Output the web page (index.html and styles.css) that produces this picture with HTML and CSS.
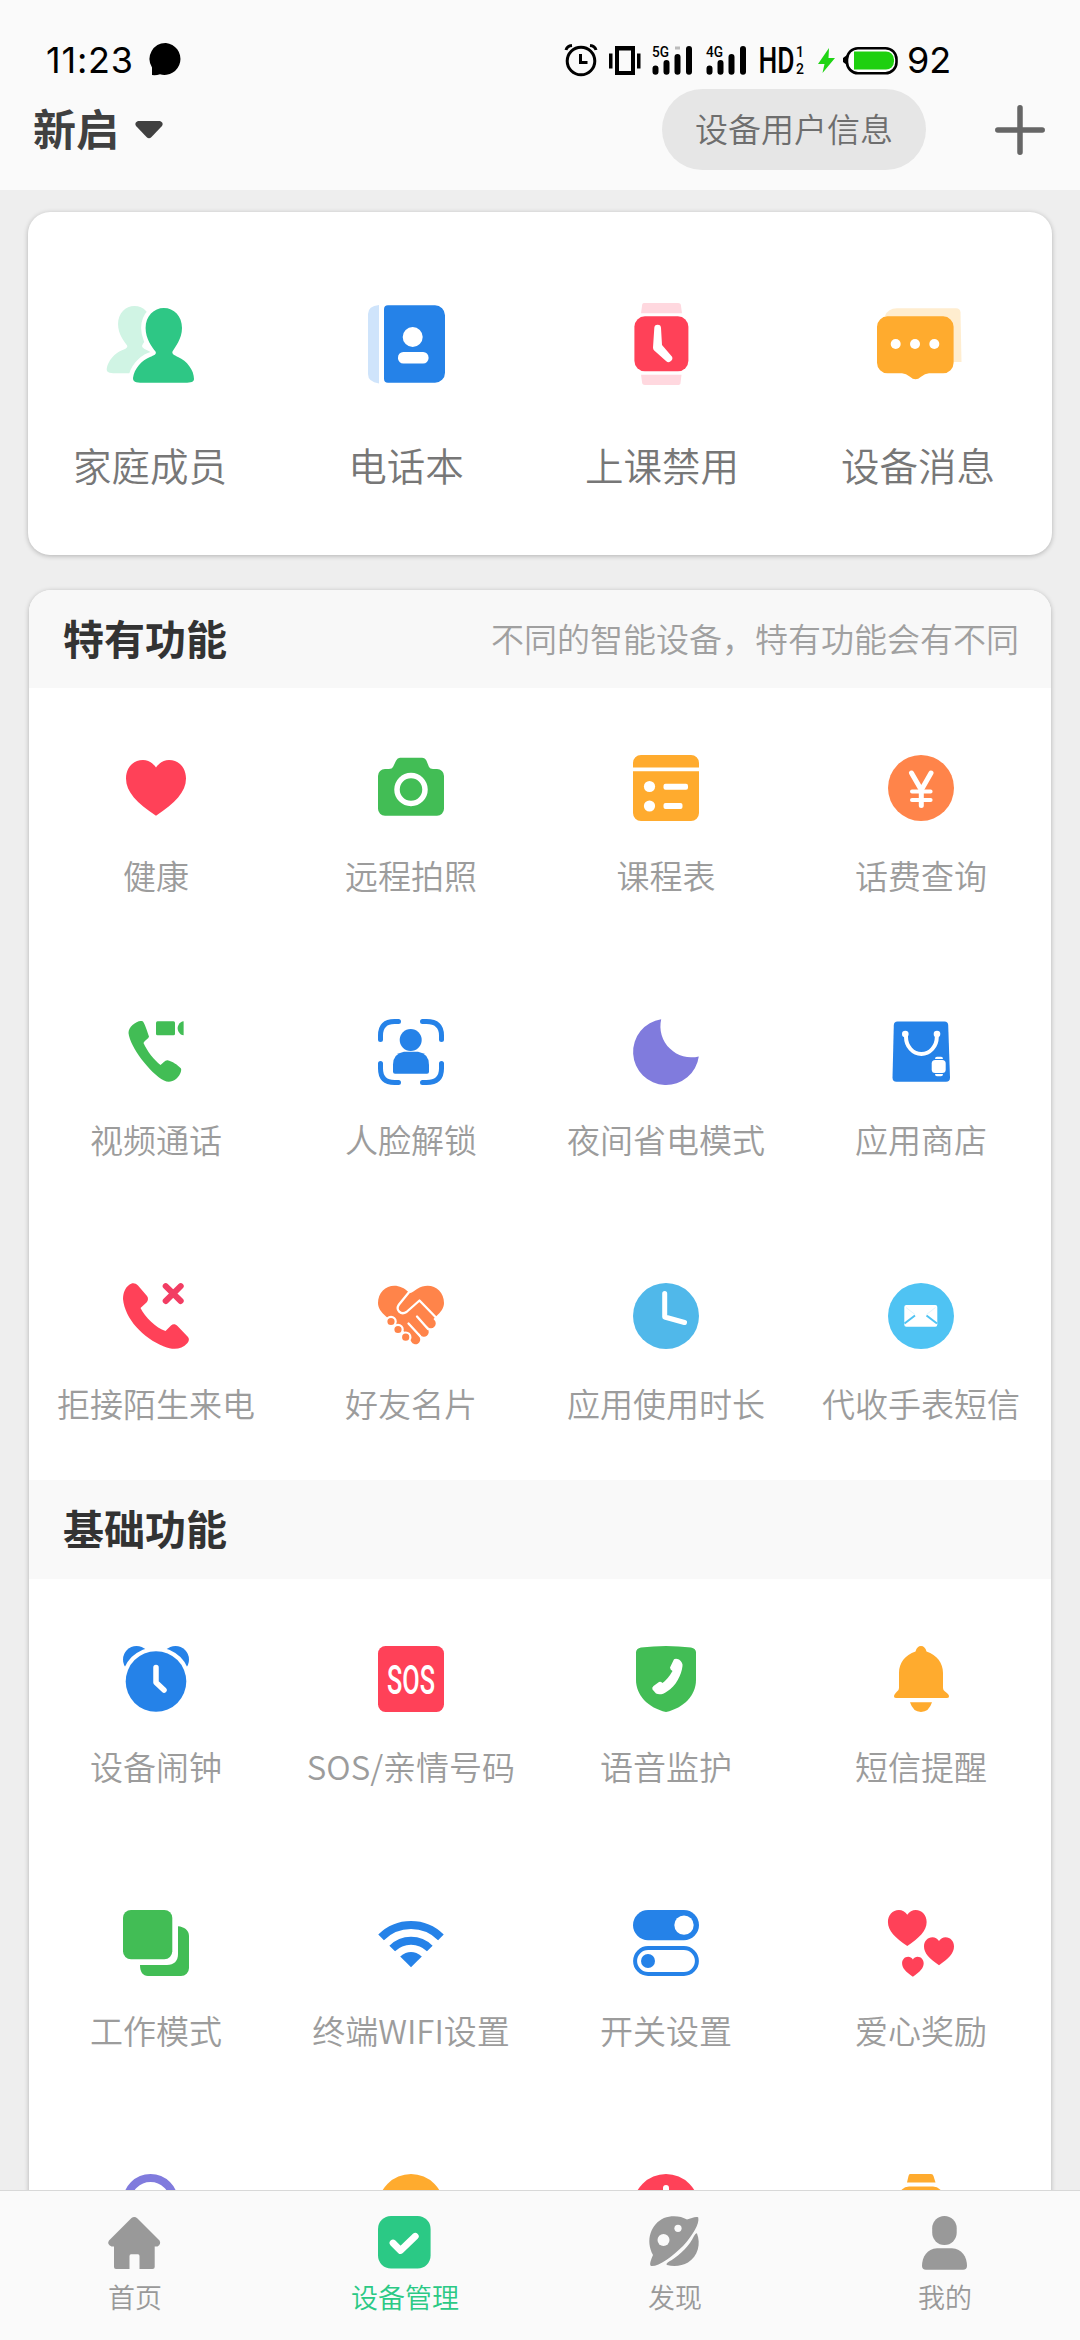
FILE: index.html
```html
<!DOCTYPE html>
<html lang="zh-CN">
<head>
<meta charset="utf-8">
<title>设备管理</title>
<link rel="stylesheet" href="styles.css">
</head>
<body>
<svg class="defs" width="0" height="0" aria-hidden="true">
  <defs>
    <path id="heart" d="M33 12.5C36 8 41 5 46 5C56 5 63 13 63 23.5C63 37 52 48 33 60.8C14 48 3 37 3 23.5C3 13 10 5 20 5C25 5 30 8 33 12.5Z"/>
    <path id="person" d="M58.8 9C69 9 77 17 77 29C77 40 70 48 67.5 52.5C66.5 55 70 56.5 73 58C82 62 89 71 89 80C89 83 86 83.7 80 83.7H38C30 83.7 28 82.5 28 79C29 70 37 61 45 58C49 56.5 52 55 50.5 52.5C47 48 40.6 40 40.6 29C40.6 17 49 9 58.8 9Z"/>
  </defs>
</svg>
<div class="screen">
  <header class="top">
    <div class="status">
      <span class="time">11:23</span>
      <svg class="bubble" width="32" height="34" viewBox="0 0 32 34"><path d="M16 0a16 16 0 1 1-6 31.300Q6 32.500 2 32V24.500A16 16 0 0 1 16 0Z"/></svg>
      <div class="indicators">
        <svg class="i-alarm" width="32" height="34" viewBox="0 0 32 34" fill="none" stroke="#000" stroke-width="3"><circle cx="16" cy="18" r="13.800"/><path d="M15.500 11v8.500h7M1 7q1-4 6-4.500M31 7q-1-4-6-4.500"/></svg>
        <svg class="i-vibrate" width="32" height="34" viewBox="0 0 32 34"><path fill-rule="evenodd" d="M6 3h20v29H6ZM10 7.500v20.500h12v-20.500ZM0 10.500h3.500v15H0ZM28 10.500h3.500v15h-3.500Z"/></svg>
        <svg class="i-signal" width="40" height="34" viewBox="0 0 40 34"><g stroke="#000" stroke-width="6" stroke-linecap="round"><path d="M3.500 25.500v3.300M14.500 20v8.800M25.500 14v14.800M37 6v22.800"/></g><text x="0" y="14" font-size="14.500" textLength="17" lengthAdjust="spacingAndGlyphs">5G</text><path d="M23 5h5" stroke="#bbb" stroke-width="3"/></svg>
        <svg class="i-signal" width="40" height="34" viewBox="0 0 40 34"><g stroke="#000" stroke-width="6" stroke-linecap="round"><path d="M3.500 25.500v3.300M14.500 20v8.800M25.500 14v14.800M37 6v22.800"/></g><text x="0" y="14" font-size="14.500" textLength="17" lengthAdjust="spacingAndGlyphs">4G</text></svg>
        <svg class="i-hd" width="46" height="34" viewBox="0 0 46 34"><text x="-1.500" y="30" font-size="36" textLength="36" lengthAdjust="spacingAndGlyphs">HD</text><text x="36" y="14" font-size="14">1</text><text x="36" y="31" font-size="14">2</text></svg>
        <svg class="i-bolt" width="17" height="34" viewBox="0 0 17 34"><path fill="#1fd414" d="M11 5 0 21h6.500L4.500 30 17 15h-6.500Z"/></svg>
        <svg class="i-battery" width="55" height="34" viewBox="0 0 55 34"><rect x="4" y="5.200" width="49.500" height="25" rx="11" fill="#fff" stroke="#000" stroke-width="2.600"/><path d="M4 12v10L0 19v-4Z"/><path fill="#1ed00f" d="M11 8.500h32a8 8 0 0 1 8 8v2a8 8 0 0 1-8 8H11Z"/></svg>
        <span class="percent">92</span>
      </div>
    </div>
    <div class="bar">
      <h1 class="device">新启</h1>
      <svg class="caret" width="28" height="18" viewBox="0 0 28 18"><path fill="#404040" d="M3 0h22q4 1.500 2 5L16.500 16q-2.500 2.500-5 0L1 5q-2-3.500 2-5Z"/></svg>
      <button class="pill">设备用户信息</button>
      <svg class="plus" width="50" height="50" viewBox="0 0 50 50"><path d="M25 2.800v44.400M2.800 25h44.400" stroke="#666" stroke-width="5.500" stroke-linecap="round"/></svg>
    </div>
  </header>

  <main class="content">
    <section class="card quick">
      <div class="tile"><svg viewBox="0 0 90 90"><use href="#person" transform="translate(-23.500 -1) scale(.9)" fill="#d0f4e4"/><use href="#person" fill="#2ec785" stroke="#fff" stroke-width="9" paint-order="stroke"/></svg><span>家庭成员</span></div>
      <div class="tile"><svg viewBox="0 0 90 90"><path fill="#cfe4fb" d="M18 6v78.500Q7 83 7 75V15Q7 7 18 6Z"/><path fill="#2582e8" d="M27 6.300h47a10 10 0 0 1 10 10v57.400a10 10 0 0 1-10 10H27q-4 0-4-4V10.300q0-4 4-4Z"/><circle cx="51.700" cy="38" r="10" fill="#fff"/><rect x="37" y="53" width="30.500" height="11.600" rx="5.300" fill="#fff"/></svg><span>电话本</span></div>
      <div class="tile"><svg viewBox="0 0 90 90"><path fill="#ffd8df" d="M27 4h34q3 0 3 3l1 7.300H24L25 7q0-3 2-3ZM24 75.700h40.500L63.500 84q0 2-3 2H28q-3 0-3-3Z"/><rect x="17.400" y="17.300" width="54" height="55" rx="10.500" fill="#ff4158"/><path fill="#fff" d="M37.300 29a3.300 3.300 0 0 1 6.700 0L45 46 54 56.500a3.600 3.600 0 0 1-5 5.500L37.200 51.500Q36 50.500 36 48.500Z"/></svg><span>上课禁用</span></div>
      <div class="tile"><svg viewBox="0 0 90 90"><path fill="#ffedcf" d="M12 17q3-7.700 12-7.700h59q4 0 4.500 4L88.500 63H80Z"/><path fill="#ffab2e" d="M14.500 17.300h55.600a10.500 10.500 0 0 1 10.500 10.500v36a10.500 10.500 0 0 1-10.500 10.500H56q-4 0-8 3.500-5.500 5-11 0-4-3.500-8-3.500H14.500A10.500 10.500 0 0 1 4 63.800v-36a10.500 10.500 0 0 1 10.500-10.500Z"/><g fill="#fff"><circle cx="22.700" cy="45" r="5"/><circle cx="42" cy="45" r="5"/><circle cx="61.300" cy="45" r="5"/></g></svg><span>设备消息</span></div>
    </section>

    <section class="card features">
      <div class="heading"><h2>特有功能</h2><p>不同的智能设备，特有功能会有不同</p></div>
      <div class="grid">
        <div class="item"><svg viewBox="0 0 66 66"><use href="#heart" fill="#ff4158"/></svg><span>健康</span></div>
        <div class="item"><svg viewBox="0 0 66 66"><path fill="#42bd55" d="M22 2.800h22q3 0 4.500 3L51 12q1 2 4 2h4a7 7 0 0 1 7 7v32.700a7 7 0 0 1-7 7H7a7 7 0 0 1-7-7V21a7 7 0 0 1 7-7h4q3 0 4-2l3-6.200q1.500-3 4-3Z"/><circle cx="33" cy="34.500" r="14" fill="none" stroke="#fff" stroke-width="5.500"/></svg><span>远程拍照</span></div>
        <div class="item"><svg viewBox="0 0 66 66"><path fill="#ffab2e" d="M8 0h50a8 8 0 0 1 8 8v4.500H0V8a8 8 0 0 1 8-8ZM0 16.300h66V58a8 8 0 0 1-8 8H8a8 8 0 0 1-8-8Z"/><g fill="#fff"><circle cx="16.500" cy="31.500" r="5.600"/><circle cx="16.500" cy="51" r="5.600"/><rect x="30.500" y="28.700" width="24.500" height="6" rx="2"/><rect x="30.500" y="48" width="19" height="6" rx="2"/></g></svg><span>课程表</span></div>
        <div class="item"><svg viewBox="0 0 66 66"><circle cx="33" cy="33" r="33" fill="#ff844a"/><g fill="none" stroke="#fff" stroke-linecap="round"><path stroke-width="5" d="M23.500 18 33.300 35 43 18M33.300 35v15.500"/><path stroke-width="4" d="M24 36.500h18.600M24 44.900h18.600"/></g></svg><span>话费查询</span></div>

        <div class="item"><svg viewBox="0 0 66 66"><path fill="#42bd55" d="M9.500 6C13 3 17 1 20 2.500C22 5 24 12 26 17.500C25.500 20 22 21 20.500 24C24 32 31 41 37.500 46C40 44 42 41 44.500 41.200C49 42 55 46 58 49.500C59 52 56 58 53 60C49 63 45 63.500 41 61.500C27 54 7 28 5.500 14C5.500 11 7 8 9.500 6Z"/><rect x="33" y="2.300" width="19" height="14" rx="1.500" fill="#42bd55"/><path fill="#42bd55" d="M60.600 2.300v14q-3 0-5-3.500-2-3.500 0-7 2-3.500 5-3.500Z"/></svg><span>视频通话</span></div>
        <div class="item"><svg viewBox="0 0 66 66"><path fill="none" stroke="#2582e8" stroke-width="5" stroke-linecap="round" d="M2.500 20.500V16.500Q2.500 2.500 16.500 2.500H20.500M44.500 2.500h4Q63.500 2.500 63.500 16.500V20.500M2.500 44.500V49.500Q2.500 63.500 16.500 63.500H20.500M44.500 63.500h4Q63.500 63.500 63.500 49.500V44.500"/><circle cx="32.700" cy="21" r="11" fill="#2582e8"/><path fill="#2582e8" d="M26 32.700h14q11 2 11 13v7q0 2-2 2H17q-2 0-2-2v-7q0-11 11-13Z"/></svg><span>人脸解锁</span></div>
        <div class="item"><svg viewBox="0 0 66 66"><path fill="#807bdd" d="M28.200.300A33 33 0 1 0 65.800 37.400A31 31 0 0 1 28.200.300Z"/></svg><span>夜间省电模式</span></div>
        <div class="item"><svg viewBox="0 0 66 66"><path fill="#2582e8" d="M9.500 2.500h47q3.500 0 3.700 3.500L62 58.700q0 4-4 4H8.500q-4 0-4-4L5.800 6q.2-3.500 3.700-3.500Z"/><path fill="none" stroke="#fff" stroke-width="4" d="M18 15v3a15.400 17 0 0 0 30.800 0v-3"/><g fill="#fff"><circle cx="17.300" cy="15" r="3.300"/><circle cx="49" cy="15" r="3.300"/><rect x="43.700" y="41" width="14" height="13" rx="3.500"/><path d="M47 40q0-2.300 2-2.300h4q2 0 2 2.300ZM47 55h8q0 2.300-2 2.300h-4q-2 0-2-2.300Z"/></g></svg><span>应用商店</span></div>

        <div class="item"><svg viewBox="0 0 66 66"><path fill="#ff4158" d="M6 2C9-.5 12-.5 15 2.500L24 13C25.500 15 25.300 17.500 23.500 19.500L17.500 25C22 34 33 45 42.500 48L48 42.500C50 40.800 52.500 41 54.500 43L65 54C66.500 56 66 58 64.500 60C58 67 50 67 41 63.500C20 55 2 36 0 16C0 10 2 5 6 2Z"/><path d="M42.700 3.200 57.700 18M57.700 3.200 42.700 18" stroke="#f23d63" stroke-width="6" stroke-linecap="round"/></svg><span>拒接陌生来电</span></div>
        <div class="item"><svg viewBox="0 0 66 66"><path fill="#ff844a" d="M31 9.500C18-4 0 4 0 20C0 25 3 29 8 33.500L35 56 58 33.500C63 29 66 25 66 20C66 6 52-2 39 6C36 8 33 11 31 9.500Z"/><g fill="none" stroke="#ff844a" stroke-width="9.500" stroke-linecap="round"><path d="M42 28 53 40.500M35 35 46 49M29 41 37.500 56.500"/></g><g fill="none" stroke="#fff" stroke-width="2.300" stroke-linecap="round" stroke-linejoin="round"><path d="M32 8 21 21.500C17 27 23 32.500 28.500 29L41.500 17.500 58 34.500M39 33.500 50 46M30.500 40.500 42 53"/></g><g fill="#ff844a" stroke="#fff" stroke-width="2.200"><circle cx="13" cy="38.500" r="4.700"/><circle cx="20" cy="46.500" r="4.700"/><circle cx="27.700" cy="54.200" r="4.700"/></g></svg><span>好友名片</span></div>
        <div class="item"><svg viewBox="0 0 66 66"><circle cx="33" cy="33" r="33" fill="#50b8ea"/><path d="M31.700 10.500V34L51.500 39.500" fill="none" stroke="#fff" stroke-width="5" stroke-linecap="round" stroke-linejoin="round"/></svg><span>应用使用时长</span></div>
        <div class="item"><svg viewBox="0 0 66 66"><circle cx="33" cy="33" r="33" fill="#4fc3f3"/><rect x="16.300" y="22" width="33" height="21.800" rx="2" fill="#fff"/><path d="M16.500 40.500 27 32.500M49 40.500 38.500 32.500" stroke="#4fc3f3" stroke-width="2"/><path d="M18 24.500 27 31.500M47.500 24.500 38.500 31.500" stroke="#d3effb" stroke-width=".7"/></svg><span>代收手表短信</span></div>
      </div>

      <div class="heading heading-basic"><h2>基础功能</h2></div>
      <div class="grid">
        <div class="item"><svg viewBox="0 0 66 66"><g fill="#2582e8"><circle cx="13.500" cy="13.500" r="13.500"/><circle cx="52.500" cy="13.500" r="13.500"/></g><circle cx="33" cy="35.500" r="34.500" fill="#fff"/><circle cx="33" cy="35.500" r="30.300" fill="#2582e8"/><path d="M33 21.500V36.500L41 44" fill="none" stroke="#fff" stroke-width="5.500" stroke-linecap="round" stroke-linejoin="round"/></svg><span>设备闹钟</span></div>
        <div class="item"><svg viewBox="0 0 66 66"><rect width="66" height="66" rx="7.500" fill="#ff4158"/><text class="sos" x="9" y="47.800" font-size="41" textLength="48" lengthAdjust="spacingAndGlyphs">SOS</text></svg><span>SOS/亲情号码</span></div>
        <div class="item"><svg viewBox="0 0 66 66"><path fill="#42bd55" d="M8 1.500Q33-1.500 58 1.500Q63 2.500 63 6.500V34C63 49 51 62 33 66C15 62 3 49 3 34V6.500Q3 2.500 8 1.500Z"/><path fill="#fff" d="M41 13.200Q43 12 46 13.500Q50 16.500 49.500 20C48.500 29 43 40 34 45.500C30 48.500 26 49 23 47.500L19.500 43.500Q18.500 41.500 20.500 40L26 36Q27.500 35 29.500 37Q35 33 39.500 25Q37 23.500 37 21.500Z"/></svg><span>语音监护</span></div>
        <div class="item"><svg viewBox="0 0 66 66"><path fill="#ffab2e" d="M33 0Q37 0 38.500 5.500C49 9 55 17 55 27V42Q55 44 57 45.500C60 47.500 61 49 61 50.500Q61 52 58.500 52H8.500Q6 52 6 50.500C6 49 7 47.500 9 45.500Q11 44 11 42V27C11 17 17 9 27.500 5.500Q29 0 33 0ZM22 56.300H44Q41 66 33 66Q25 66 22 56.300Z"/></svg><span>短信提醒</span></div>

        <div class="item"><svg viewBox="0 0 66 66"><rect width="49.300" height="49.300" rx="8" fill="#42bd55"/><path fill="#42bd55" d="M55 16.300C61 17 66 20 66 26V58A8 8 0 0 1 58 66H25C20 66 17 62 17 55H44C51 55 55 51 55 44Z"/></svg><span>工作模式</span></div>
        <div class="item"><svg viewBox="0 0 66 66"><path fill="none" stroke="#2582e8" stroke-width="8" d="M3.100 27.400a42.300 42.300 0 0 1 59.800 0M14.200 38.500a26.600 26.600 0 0 1 37.600 0"/><path fill="#2582e8" d="M22.200 46.500Q33 37.700 43.800 46.500L33 57.300Z"/></svg><span>终端WIFI设置</span></div>
        <div class="item"><svg viewBox="0 0 66 66"><rect width="66" height="30.200" rx="15.100" fill="#2582e8"/><circle cx="51" cy="15.100" r="9.700" fill="#fff"/><rect x="2.100" y="38" width="61.800" height="26" rx="13" fill="none" stroke="#2582e8" stroke-width="4"/><circle cx="15" cy="51" r="7" fill="#2582e8"/></svg><span>开关设置</span></div>
        <div class="item"><svg viewBox="0 0 66 66" fill="#ff4158"><use href="#heart" transform="translate(-2 -3.200) scale(.645)"/><use href="#heart" transform="translate(34.500 24.800) scale(.5)"/><use href="#heart" transform="translate(13 44.900) scale(.36)"/></svg><span>爱心奖励</span></div>

        <div class="item"><svg viewBox="0 0 66 66"><circle cx="27.500" cy="27.500" r="23.500" fill="none" stroke="#807bdd" stroke-width="8"/></svg></div>
        <div class="item"><svg viewBox="0 0 66 66"><circle cx="33" cy="33" r="33" fill="#ffab2e"/></svg></div>
        <div class="item"><svg viewBox="0 0 66 66"><circle cx="33" cy="33" r="33" fill="#ff4158"/><path d="M33 14v20" stroke="#fff" stroke-width="6" stroke-linecap="round"/></svg></div>
        <div class="item"><svg viewBox="0 0 66 66" fill="#ffab2e"><path d="M22 0H43Q45 0 45.500 2L47.500 8.500H19L20.500 2Q21 0 22 0Z"/><rect x="11" y="12.600" width="44" height="40" rx="10"/></svg></div>
      </div>
    </section>
  </main>

  <nav class="tabs">
    <a class="tab"><svg viewBox="0 0 54 54"><path fill="#999" d="M23.500 2Q26.500 0 29.500 2.500L51.500 24.500Q53.500 28 49.500 30.500H46.700V51Q46.700 53 44.500 53H31.500V40Q31.500 38.200 30 38.200H23Q21.500 38.200 21.500 40V53H8Q6 53 6 51V30.500H3.500Q-1.500 28 1 24.500Z"/></svg><span>首页</span></a>
    <a class="tab active"><svg viewBox="0 0 54 54"><rect width="52.600" height="52.600" rx="13" fill="#2bc985"/><path d="M15 27 22.500 34.500 37.300 20.300" fill="none" stroke="#fff" stroke-width="6.800" stroke-linecap="round" stroke-linejoin="round"/></svg><span>设备管理</span></a>
    <a class="tab"><svg viewBox="0 0 54 54"><path fill="#999" d="M50.300 1.500C51.500 8 45 19 35 30C24 41 10 51 3 50C1 48.500 3 44 5 39C-3 24 3 8 16 2C24-1 33 0 39 3.500C43 2.500 48 0 50.300 1.500ZM49 17.500C53 28 50 40 40 46.500C34 50 26 51 19 49C17.500 48 20 46 23 44.500C33 38 42 29 46 20Q48 16.500 49 17.500Z"/><circle cx="15.500" cy="24" r="6" fill="#fafafa"/><circle cx="30" cy="12.300" r="3.600" fill="#fafafa"/></svg><span>发现</span></a>
    <a class="tab"><svg viewBox="0 0 54 54" fill="#999"><rect x="14.200" width="24.500" height="29" rx="12.200"/><path d="M19 32.300H34C44 33 49 41 49 50Q49 53.700 45 53.700H8Q4 53.700 4 50C4 41 9 33 19 32.300Z"/></svg><span>我的</span></a>
  </nav>
</div>
</body>
</html>
```
FILE: styles.css
```css
* {
  box-sizing: border-box;
}

body {
  margin: 0;
  background: #eee;
  font-family: "Noto Sans CJK SC DemiLight", "Noto Sans CJK SC", "Noto Sans", sans-serif;
  font-weight: 350;
}

h1, h2, p {
  margin: 0;
}

h1, h2 {
  font-family: "Noto Sans CJK SC", "Noto Sans", sans-serif;
}

svg {
  display: block;
  flex: none;
  overflow: visible;
}

.defs {
  position: absolute;
}

.screen {
  display: flex;
  flex-direction: column;
  width: 1080px;
  height: 2340px;
  overflow: hidden;
}

/* Header */
.top {
  flex: none;
  height: 190px;
  background: #fafafa;
}

.status {
  display: flex;
  align-items: center;
  height: 89px;
  padding: 31px 0 0 46px;
  font-family: Inter, sans-serif;
  font-size: 36px;
  font-weight: 400;
  line-height: 58px;
  color: #000;
}

.time {
  width: 104px;
  letter-spacing: .8px;
}

.indicators {
  display: flex;
  align-items: center;
  margin-left: 383px;
}

.indicators svg {
  margin-bottom: 1px;
}

.indicators text {
  font-family: Roboto, sans-serif;
  font-weight: 500;
}

.i-alarm, .i-signal, .i-hd {
  margin-right: 12px;
}

.i-vibrate {
  margin-right: 11px;
}

.i-signal {
  margin-right: 14px;
}

.i-bolt {
  margin-right: 8px;
}

.i-battery {
  margin-right: 9px;
}

.bar {
  display: flex;
  align-items: center;
  height: 81px;
  padding: 0 35px 0 33px;
}

.device {
  padding-bottom: 5px;
  font-size: 43px;
  font-weight: 700;
  line-height: 60px;
  color: #404040;
}

.caret {
  margin-left: 16px;
}

.pill {
  width: 264px;
  height: 81px;
  margin: 0 69px 0 auto;
  padding: 0 0 3px;
  border: 0;
  border-radius: 41px;
  background: #e6e6e6;
  color: #6e6e6e;
  font: inherit;
  font-size: 33px;
}

/* Cards */
.content {
  flex: 1;
  min-height: 0;
  padding: 22px 28px 0;
  overflow: hidden;
}

.card {
  border-radius: 22px;
  background: #fff;
  box-shadow: 0 1px 5px rgba(0, 0, 0, .25);
}

.quick {
  display: grid;
  grid-template-columns: repeat(4, 256px);
  height: 343px;
  padding-top: 87px;
}

.tile {
  display: flex;
  flex-direction: column;
  align-items: center;
  padding-right: 12px;
  font-size: 38.5px;
  line-height: 58px;
  color: #777;
}

.tile svg {
  width: 90px;
  height: 90px;
  margin-bottom: 46px;
}

.features {
  margin: 35px 1px 0;
  overflow: hidden;
}

.heading {
  display: flex;
  align-items: center;
  justify-content: space-between;
  height: 98px;
  padding: 0 32px 5px 34px;
  background: #f8f8f8;
}

.heading-basic {
  height: 99px;
  background: #f9f9f9;
}

.heading h2 {
  font-size: 41px;
  font-weight: 700;
  line-height: 60px;
  color: #333;
}

.heading p {
  padding-top: 2px;
  font-size: 33px;
  line-height: 48px;
  color: #a0a0a0;
}

.grid {
  display: grid;
  grid-template-columns: repeat(4, 255px);
  grid-auto-rows: 264px;
}

.item {
  display: flex;
  flex-direction: column;
  align-items: center;
  padding: 67px 1px 0 0;
  font-size: 33px;
  line-height: 48px;
  color: #9c9c9c;
  white-space: nowrap;
}

.item svg {
  width: 66px;
  height: 66px;
  margin-bottom: 30px;
}

.sos {
  font-family: Roboto, sans-serif;
  font-weight: 500;
  fill: #fff;
}

/* Bottom navigation */
.tabs {
  display: grid;
  grid-template-columns: repeat(4, 1fr);
  flex: none;
  height: 150px;
  border-top: 1px solid #d8d8d8;
  background: #fafafa;
}

.tab {
  display: flex;
  flex-direction: column;
  align-items: center;
  padding-top: 25px;
  font-size: 27px;
  line-height: 40px;
  color: #999;
}

.tab svg {
  width: 54px;
  height: 54px;
  margin-bottom: 7px;
}

.tab.active {
  color: #2bc985;
}
```
